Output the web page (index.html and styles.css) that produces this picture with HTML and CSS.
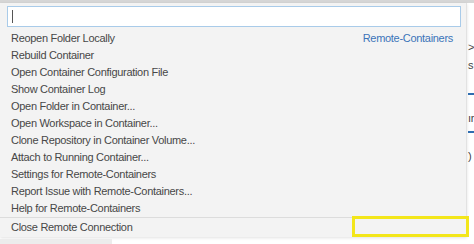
FILE: index.html
```html
<!DOCTYPE html>
<html>
<head>
    <meta charset="utf-8">
    <title> Command Palette </title>
    <link rel="stylesheet" href="styles.css">
</head>
<body>
    <div class="screen">
        <div class="topbar"></div>

        <div class="middle">
            <!-- Quick pick -->
            <div class="palette">
                <div class="search">
                    <div class="input"><span class="caret"></span></div>
                </div>

                <ul class="items">
                    <li class="item">
                        <span>Reopen Folder Locally</span>
                        <span class="group">Remote-Containers</span>
                    </li>
                    <li class="item">Rebuild Container</li>
                    <li class="item">Open Container Configuration File</li>
                    <li class="item">Show Container Log</li>
                    <li class="item">Open Folder in Container...</li>
                    <li class="item">Open Workspace in Container...</li>
                    <li class="item">Clone Repository in Container Volume...</li>
                    <li class="item">Attach to Running Container...</li>
                    <li class="item">Settings for Remote-Containers</li>
                    <li class="item">Report Issue with Remote-Containers...</li>
                    <li class="item">Help for Remote-Containers</li>
                    <li class="item sep">
                        <span>Close Remote Connection</span>
                        <span class="highlight"></span>
                    </li>
                </ul>
            </div>

            <!-- what peeks out behind the palette -->
            <div class="behind">
                <span class="glyph g1">&gt;</span>
                <span class="glyph g2">s</span>
                <span class="tick t1"></span>
                <span class="glyph g3">ır</span>
                <span class="tick t2"></span>
                <span class="glyph g4">)</span>
            </div>
        </div>

        <div class="bottom">
            <span class="bottom-left"></span>
        </div>
    </div>
</body>
</html>
```

FILE: styles.css
```css
:root {
    --panel:  #f3f3f3;
    --text:   #474747;
    --blue:   #3b73b9;
    --border: #a9cbe9;
    --line:   #dcdcdc;
    --yellow: #f3e61a;
}

* {
    box-sizing: border-box;
}

body {
    margin: 0;
    width: 474px;
    height: 244px;
    overflow: hidden;

    font-family: "Liberation Sans", Arial, sans-serif;
    font-size: 11px;
    letter-spacing: -0.3px;
    color: var( --text );
    background-color: #fff;
}

.screen {
    display: flex;
    flex-direction: column;
    height: 244px;
}

.topbar {
    height: 3px;
    background-color: #d6d6d6;
}

.middle {
    display: flex;
}

.palette {
    width: 467px;
    background-color: var( --panel );
    border-right: 1px solid #e2e2e2;
    box-shadow: 0 1px 3px rgba(0, 0, 0, 0.12);
}

.search {
    padding: 3px 5px 2px 7px;
}

.input {
    height: 21px;
    display: flex;
    align-items: center;
    padding-left: 4px;

    background-color: #fff;
    border: 1px solid var( --border );
}

.caret {
    width: 1px;
    height: 13px;
    background-color: #555;
}

.items {
    margin: 0;
    padding: 0 0 1px 0;
    list-style: none;
}

.item {
    height: 17px;
    display: flex;
    align-items: center;
    justify-content: space-between;
    padding-left: 11px;
    white-space: nowrap;
}

.group {
    color: var( --blue );
    padding-right: 13px;
}

.sep {
    height: 19px;
    margin-top: 1px;
    border-top: 1px solid var( --line );
    position: relative;
}

.highlight {
    position: absolute;
    left: 352px;
    top: -2px;
    width: 117px;
    height: 21px;
    border: 3px solid var( --yellow );
}

.behind {
    flex: 1;
    position: relative;
    color: #444;
}

.glyph {
    position: absolute;
    left: 1px;
    font-size: 11px;
}

.g1 { top: 38px; }
.g2 { top: 56px; }
.g3 { top: 109px; }
.g4 { top: 147px; }

.tick {
    position: absolute;
    left: 1px;
    width: 6px;
    height: 2px;
    background-color: #2f6db0;
}

.t1 { top: 90px; }
.t2 { top: 128px; }

.bottom {
    flex: 1;
    display: flex;
    align-items: stretch;
    padding-top: 2px;
}

.bottom-left {
    width: 112px;
    background-color: #ececec;
}
```
